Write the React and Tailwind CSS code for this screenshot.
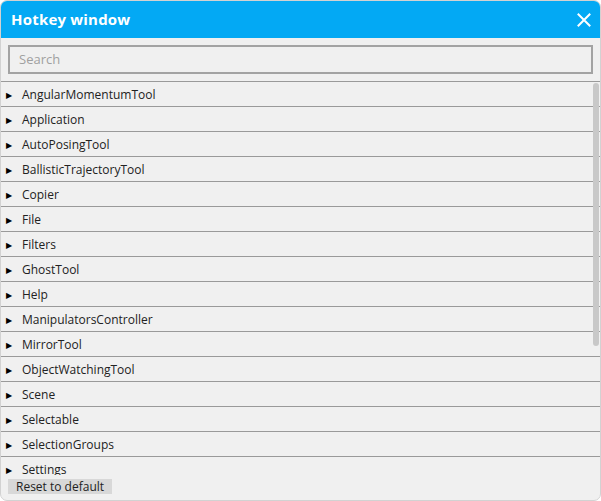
import React from "react";

const items = [
  "AngularMomentumTool",
  "Application",
  "AutoPosingTool",
  "BallisticTrajectoryTool",
  "Copier",
  "File",
  "Filters",
  "GhostTool",
  "Help",
  "ManipulatorsController",
  "MirrorTool",
  "ObjectWatchingTool",
  "Scene",
  "Selectable",
  "SelectionGroups",
  "Settings",
];

export default function App() {
  return (
    <div
      className="w-[601px] h-[501px] bg-white"
      style={{ fontFamily: '"Open Sans", "Noto Sans", sans-serif' }}
    >
      <div className="w-[601px] h-[501px] rounded-[7px] border border-[#d2d2d2] bg-[#f0f0f0] overflow-hidden flex flex-col">
        <div className="h-[37px] shrink-0 bg-[#03a9f4] flex items-center justify-between pl-[10px] pr-[9px]">
          <span className="text-white font-bold text-[15px] leading-none tracking-[0.2px]">
            Hotkey window
          </span>
          <svg width="14" height="14" viewBox="0 0 14 14">
            <path d="M1.5 1.5 L12.5 12.5 M12.5 1.5 L1.5 12.5" stroke="white" strokeWidth="2" strokeLinecap="square" />
          </svg>
        </div>
        <div className="px-[7px] pt-[7px] pb-[7px] shrink-0">
          <div className="h-[29px] border-2 border-[#a3a3a3] flex items-center pl-[9px] text-[13px] text-[#a0a0a0]">
            Search
          </div>
        </div>
        <div className="relative h-[394px] shrink-0 overflow-hidden">
          {items.map((it) => (
            <div
              key={it}
              className="h-[25px] border-t border-[#9a9a9a] flex items-center pt-[2px] text-[12px] text-[#222]"
            >
              <span className="text-[8px] ml-[5px] mr-[10px] text-black leading-none">▶</span>
              <span>{it}</span>
            </div>
          ))}
          <div className="absolute right-[1px] top-[2px] w-[6px] h-[263px] rounded-[3px] bg-[#c8c8c8]" />
        </div>
        <div className="flex-1 flex items-start pl-[7px] pt-[4px]">
          <div className="bg-[#d8d8d8] px-[8px] h-[15px] flex items-center text-[12px] leading-none text-[#222]">
            Reset to default
          </div>
        </div>
      </div>
    </div>
  );
}
